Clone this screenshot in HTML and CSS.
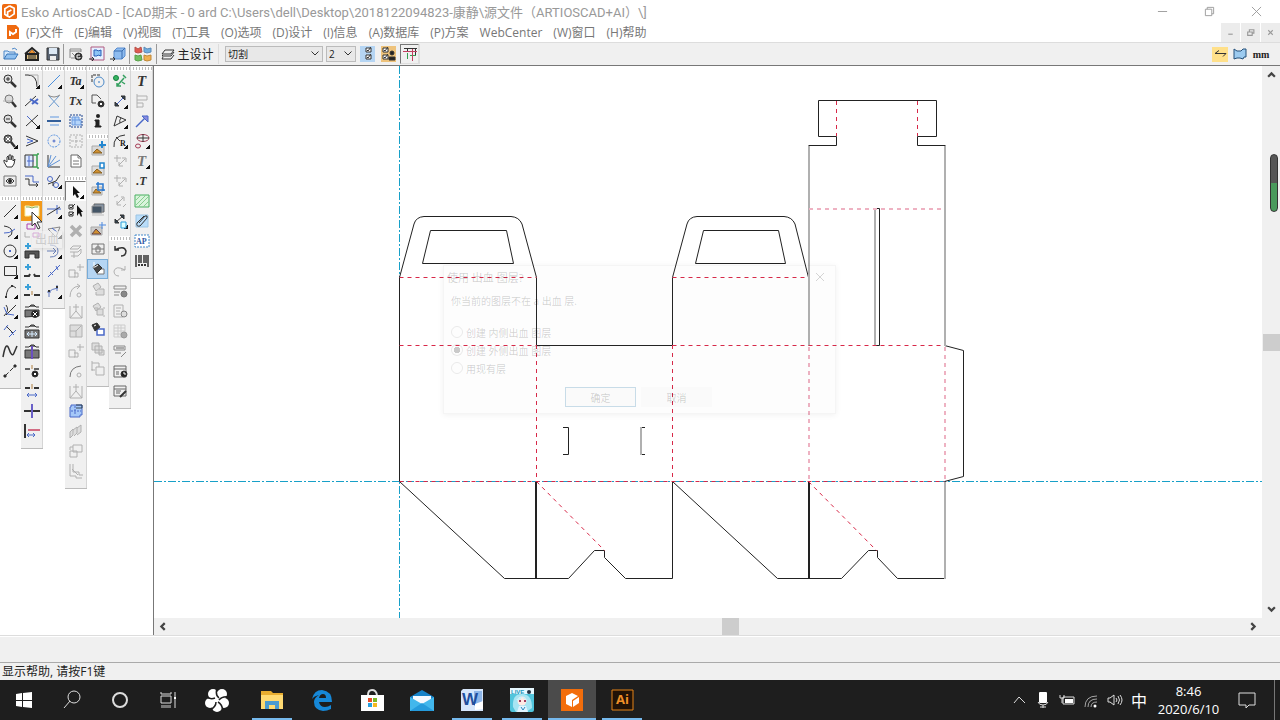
FILE: index.html
```html
<!DOCTYPE html>
<html lang="zh-CN">
<head>
    <meta charset="UTF-8">
    <meta name="viewport" content="width=device-width, initial-scale=1.0">
    <title>Esko ArtiosCAD</title>
    <link rel="stylesheet" href="styles.css">
</head>
<body>
    <header class="titlebar">
        <svg class="logo" viewBox="0 0 16 16"><rect width="16" height="16" rx="2" fill="#ef6a10"/><path d="M8 2l5 2.500v6L8 14l-2-1V8.500l4-2M6 13l-3-2V5l5-3" fill="none" stroke="#fff" stroke-width="1.800"/></svg>
        <h1>Esko ArtiosCAD - [CAD期末 - 0 ard C:\Users\dell\Desktop\2018122094823-康静\源文件（ARTIOSCAD+AI）\]</h1>
        <div class="window-buttons">
            <button aria-label="最小化"><svg viewBox="0 0 12 12"><path d="M1 6h10"/></svg></button>
            <button aria-label="还原"><svg viewBox="0 0 12 12"><path d="M1.500 3.500h7v7h-7zM3.500 3.500v-2h7v7h-2"/></svg></button>
            <button aria-label="关闭"><svg viewBox="0 0 12 12"><path d="M1 1l10 10M11 1L1 11"/></svg></button>
        </div>
    </header>

    <nav class="menubar">
        <svg class="doc-logo" viewBox="0 0 12 14"><path d="M0 0h9l3 3v11H0z" fill="#ef6a10"/><path d="M3 11V7l3 2 3-2V4" fill="none" stroke="#fff" stroke-width="2"/></svg>
        <button>(F)文件</button>
        <button>(E)编辑</button>
        <button>(V)视图</button>
        <button>(T)工具</button>
        <button>(O)选项</button>
        <button>(D)设计</button>
        <button>(I)信息</button>
        <button>(A)数据库</button>
        <button>(P)方案</button>
        <button>WebCenter</button>
        <button>(W)窗口</button>
        <button>(H)帮助</button>
        <div class="doc-buttons">
            <button aria-label="最小化文档"><svg viewBox="0 0 8 8"><path d="M2 5.500h4"/></svg></button>
            <button aria-label="还原文档"><svg viewBox="0 0 8 8"><path d="M1.500 3.500h4v3h-4zM3 3V1.500h4v3H6"/></svg></button>
            <button aria-label="关闭文档"><svg viewBox="0 0 8 8"><path d="M2 2l4 4M6 2L2 6"/></svg></button>
        </div>
    </nav>

    <div class="toolbar">
        <div class="group">
            <button aria-label="打开"><svg viewBox="0 0 16 16"><path d="M1 13V5h4l1 1h6v2" fill="#d5e8fb" stroke="#4a86c8"/><path d="M1 13l3-5h11l-3 5z" fill="#8fc0f0" stroke="#3a76b8"/><path d="M9 3q3-2 5 1" stroke="#4a86c8"/></svg></button>
            <button aria-label="打开标准"><svg viewBox="0 0 16 16"><path d="M1 8l7-6 7 6" stroke="#222" stroke-width="2"/><path d="M5 7l3-3 3 3z" fill="#f0a040" stroke="#c07020"/><path d="M2 14V8h12v6z" fill="#e0c080" stroke="#222" stroke-width="2"/><path d="M4 10h8M4 12h8" stroke="#222"/></svg></button>
            <button aria-label="保存"><svg viewBox="0 0 16 16"><path d="M2 2h12v12H2z" fill="#5a6472" stroke="#333"/><path d="M4 2h8v6H4z" fill="#dce8f4" stroke="none"/><path d="M5 10h6v4H5z" fill="#eee" stroke="none"/></svg></button>
        </div>
        <div class="group">
            <button aria-label="重建"><svg viewBox="0 0 16 16"><path d="M2 12V3h11v3M2 5h11M4 7l3 3M3 12h4" stroke="#888"/><circle cx="10.500" cy="10.500" r="3.500" fill="#333"/><path d="M12 9h-3v3h3v-1" stroke="#fff"/></svg></button>
            <button aria-label="转换设计"><svg viewBox="0 0 16 16"><path d="M2 1h13v13H2z" fill="#e6f0ff" stroke="#b05a80"/><path d="M5 4h3l1 1 3-1v6l-3-1-1 1H5z" fill="#8cc4f5" stroke="#2a5fb8"/><path d="M0 13h5M3 11l2 2-2 2"/></svg></button>
            <button aria-label="转换三维"><svg viewBox="0 0 16 16"><path d="M4 5l3-3h8v8l-3 3H4z" fill="#8ebcf0" stroke="#5a8cce"/><path d="M4 5h8v8M12 5l3-3" stroke="#3a6cae"/><path d="M0 13h5M3 11l2 2-2 2"/></svg></button>
        </div>
        <div class="group layout">
            <button aria-label="布局"><svg viewBox="0 0 18 16"><path d="M1 1l3 2 3-2 1 5-4 1-3-1z" fill="#e05a50" stroke="#b85048"/><path d="M10 1l3 2 4-1v4l-4 1-3-1z" fill="#70aee0" stroke="#5a8ab8"/><path d="M1 9l3 1 3-1 1 5-4 1-3-1z" fill="#70c060" stroke="#58a048"/><path d="M10 9l3 1 4-1v5l-4 1-3-1z" fill="#f0b050" stroke="#c08838"/></svg></button>
        </div>
        <div class="group light">
            <button class="layer"><svg viewBox="0 0 14 16"><path d="M1 8l3-4h9l-3 4zM2 9l-1 1h9l3-4M2 11l-1 2h9l3-4"/></svg>主设计</button>
        </div>
        <div class="group lists">
            <span class="pick line-type"><select aria-label="线型"><option>切割</option><option>折痕</option></select><svg viewBox="0 0 8 5"><path d="M0.500 0.500L4 4l3.500-3.500"/></svg></span>
            <span class="pick weight"><select aria-label="点数"><option>2</option><option>3</option></select><svg viewBox="0 0 8 5"><path d="M0.500 0.500L4 4l3.500-3.500"/></svg></span>
        </div>
        <div class="group views">
            <button class="blue" aria-label="查看模式"><svg viewBox="0 0 14 16"><path d="M5 2h5v4H5zM5 9h5v4H5z" fill="#fff"/><path d="M6 4l1 1 3-4M6 11l1 1 3-4"/></svg></button>
            <button class="amber" aria-label="用户视图"><svg viewBox="0 0 14 16"><path d="M1 2h5v4H1zM1 9h5v4H1z" fill="#fff"/><path d="M2 4l1 1 3-4M2 11l1 1 3-4"/><circle cx="10" cy="7" r="2" fill="#222"/><path d="M7 14v-3h6v3z" fill="#222"/></svg></button>
            <button class="pressed" aria-label="层显示"><svg viewBox="0 0 16 16"><path d="M2 2.500h13M5.500 2v4M13.500 2v7"/><path d="M5.500 7v6M8 9.500h6" stroke="#30a050"/><path d="M1 5.500h14M10.500 3v12" stroke="#c04060"/></svg></button>
        </div>
        <div class="group units">
            <button class="yellow" aria-label="纹理方向"><svg viewBox="0 0 16 16"><path d="M3 7.500h11l-3 3M3 7.500l4-3"/></svg></button>
            <button aria-label="面"><svg viewBox="0 0 16 16"><path d="M2 3l3 2h4l2-2h3v8h-2l-1 2-3-1H5l-3 1z" fill="#9ccbf0" stroke="#24507a"/></svg></button>
            <button class="mm">mm</button>
        </div>
    </div>

    <main class="workspace">
        <aside class="palette">
            <div class="column">
                <div class="tools">
                    <button aria-label="放大"><svg viewBox="0 0 16 16"><circle cx="6" cy="6" r="4" fill="#ddd"/><path d="M4 6h4M6 4v4"/><path d="M9 9l5 5" stroke-width="2.500"/></svg></button>
                    <button aria-label="缩放到适合"><svg viewBox="0 0 16 16"><circle cx="7" cy="6" r="4" fill="#ddd" stroke="#777"/><path d="M1 8h9" class="g"/><path d="M10 9l4 5" stroke-width="2.500"/></svg></button>
                    <button aria-label="缩小"><svg viewBox="0 0 16 16"><circle cx="6" cy="6" r="4" fill="#ddd"/><path d="M4 6h4"/><path d="M9 9l5 5" stroke-width="2.500"/></svg></button>
                    <button class="more" aria-label="缩放"><svg viewBox="0 0 16 16"><circle cx="6" cy="6" r="4" fill="#777"/><path d="M4 4l4 4M8 4L4 8" stroke="#fff"/><path d="M9 9l4 5" stroke-width="2.500"/></svg></button>
                    <button aria-label="平移"><svg viewBox="0 0 16 16"><path d="M5 14L2 9V7l3 2V4l1-1 1 4V2h2v5l1-4h1v5l2-2-1 5-2 3z" fill="#fff"/></svg></button>
                    <button aria-label="预览"><svg viewBox="0 0 16 16"><path d="M2 3h12v10H2z" fill="#eee" stroke="#777"/><path d="M4 8q4-5 8 0q-4 5-8 0"/><circle cx="8" cy="8" r="1.500" fill="#222"/></svg></button>
                </div>
                <div class="tools">
                    <button class="more" aria-label="线"><svg viewBox="0 0 16 16"><path d="M2 14L14 2"/></svg></button>
                    <button class="more" aria-label="切线弧"><svg viewBox="0 0 16 16"><path d="M2 3q7 1 8 5t-4 6"/><path d="M2 10q5 1 11-4" class="b"/></svg></button>
                    <button class="more" aria-label="圆"><svg viewBox="0 0 16 16"><circle cx="8" cy="8" r="6"/><path d="M7 8h2" class="b" stroke-width="2"/></svg></button>
                    <button class="more" aria-label="矩形"><svg viewBox="0 0 16 16"><path d="M2.500 3.500h12v9h-12z"/></svg></button>
                    <button class="more" aria-label="弧"><svg viewBox="0 0 16 16"><path d="M4 14q1-10 7-11l3 2"/><path d="M3 14h2M9 3h2" stroke-width="2"/></svg></button>
                    <button class="more" aria-label="偏移弧"><svg viewBox="0 0 16 16"><path d="M4 2q4 5-2 11M14 2L4 12"/><path d="M2 4l3 7 7 1" class="b"/></svg></button>
                    <button aria-label="垂线"><svg viewBox="0 0 16 16"><path d="M4 3l7 7"/><path d="M2 7l4-5M7 14l7-7M9 9l3 3" class="b"/></svg></button>
                    <button aria-label="曲线"><svg viewBox="0 0 16 16"><path d="M1 14Q4-3 7 6t5 4l3-7" stroke-width="1.500"/></svg></button>
                    <button aria-label="端点"><svg viewBox="0 0 16 16"><path d="M3 13L13 3" stroke-dasharray="5 2"/><path d="M2 12h2v2H2zM12 2h2v2h-2z" fill="#222"/></svg></button>
                </div>
            </div>
            <div class="column">
                <div class="tools">
                    <button class="more" aria-label="圆角"><svg viewBox="0 0 16 16"><path d="M1 2h3q9 0 9 12"/><path d="M6 2h8v10" class="g"/></svg></button>
                    <button aria-label="修剪"><svg viewBox="0 0 16 16"><path d="M1 13L12 3"/><path d="M6 6l8 5M8 11l6-5" class="b" stroke-width="2"/></svg></button>
                    <button class="more" aria-label="分割"><svg viewBox="0 0 16 16"><path d="M2 13L14 2M7 7l7 7"/><path d="M3 3l4 4" class="b"/></svg></button>
                    <button aria-label="延伸"><svg viewBox="0 0 16 16"><path d="M2 3l12 5-12 5"/><path d="M3 6l6 2-6 2" class="b"/></svg></button>
                    <button aria-label="拉伸"><svg viewBox="0 0 16 16"><path d="M1 2h8v12H1z" fill="#dce8ff"/><path d="M9 2h4v12H9M13 1h2M13 15h2" stroke="#3aa050" stroke-width="1.500"/><path d="M5 3v10M3 8h7" class="b"/></svg></button>
                    <button aria-label="阶梯"><svg viewBox="0 0 16 16"><path d="M1 3h8v6h6" class="b"/><path d="M1 6h4v6h9l-2-2m2 2l-2 2"/></svg></button>
                </div>
                <div class="tools">
                    <button class="active" aria-label="出血"><svg viewBox="0 0 16 16"><path d="M1 3h4l3 1 3-1h4v10h-4l-3-1-3 1H1z" fill="#fff" stroke="#f8f0a0"/><path d="M2 4h3l3 1 3-1h3" stroke="#88b060"/></svg></button>
                    <button aria-label="桥接"><svg viewBox="0 0 16 16"><path d="M3 1h8v5H3zM9 10h6v4H9z" stroke="#b040b0"/><path d="M1 9v5h5" class="g"/></svg></button>
                    <button aria-label="添加槽"><svg viewBox="0 0 16 16"><path d="M1 15V8h14v7h-4v-4H5v4z" fill="#555"/><path d="M4 0v6M1 3h6" stroke="#3aa0d8" stroke-width="2"/></svg></button>
                    <button aria-label="添加桥"><svg viewBox="0 0 16 16"><path d="M0 13h5l1-2M10 11l1 2h5" stroke-width="2"/><path d="M4 1v6M1 4h6" stroke="#3aa0d8" stroke-width="2"/></svg></button>
                    <button aria-label="添加断点"><svg viewBox="0 0 16 16"><path d="M0 12h6m4 0h6" stroke-width="2"/><path d="M8 8v4" stroke="#b08040"/><path d="M4 1v6M1 4h6" stroke="#3aa0d8" stroke-width="2"/></svg></button>
                    <button aria-label="删除槽"><svg viewBox="0 0 16 16"><path d="M1 4h4l2-2h3l2 2h3M1 14V7h14v6z" fill="#777"/><circle cx="11" cy="11" r="3.500" fill="#222"/><path d="M9 9l4 4m0-4l-4 4" stroke="#fff"/></svg></button>
                    <button aria-label="移动槽"><svg viewBox="0 0 16 16"><path d="M1 4h4l2-2h3l2 2h3M1 7h14v8H1z" fill="#777"/><path d="M3 11h10M5 9l-2 2 2 2M11 9l2 2-2 2M8 8v6" stroke="#d5ebff"/></svg></button>
                    <button aria-label="对齐槽"><svg viewBox="0 0 16 16"><path d="M1 4h4l2-2h3l2 2h3M1 7h14v8H1z" fill="#777"/><path d="M8 3v13" stroke="#6a50c0" stroke-width="2"/></svg></button>
                    <button aria-label="删除断点"><svg viewBox="0 0 16 16"><path d="M1 6h5m4 0h5" stroke-width="1.500"/><path d="M8 2v4" stroke="#b08040"/><circle cx="11" cy="11" r="3" fill="#222"/><path d="M10 10l2 2m0-2l-2 2" stroke="#fff"/></svg></button>
                    <button aria-label="移动断点"><svg viewBox="0 0 16 16"><path d="M1 5h5m4 0h5" stroke-width="2"/><path d="M8 1v5" stroke="#b08040"/><path d="M3 12h10M5 10l-2 2 2 2M11 10l2 2-2 2" class="b"/></svg></button>
                    <button aria-label="中心断点"><svg viewBox="0 0 16 16"><path d="M0 8h16" stroke-width="2"/><path d="M8 1v14" stroke="#6a60c8" stroke-width="2"/></svg></button>
                    <button aria-label="间距"><svg viewBox="0 0 16 16"><path d="M1 1v14" stroke-width="2"/><path d="M4 7h12" stroke="#c84060" stroke-width="1.500"/><path d="M3 12h8M5 10l-2 2 2 2M9 10l2 2-2 2" class="b"/></svg></button>
                </div>
            </div>
            <div class="column">
                <div class="tools">
                    <button class="more" aria-label="构造线"><svg viewBox="0 0 16 16"><path d="M2 14L14 2" stroke="#4c90dd"/></svg></button>
                    <button aria-label="弧构造"><svg viewBox="0 0 16 16"><path d="M3 3l10 11M13 3L3 14" stroke="#6a9ad0"/><path d="M2 2q6 4 12 0" stroke="#888"/></svg></button>
                    <button aria-label="偏移线"><svg viewBox="0 0 16 16"><path d="M4 4h9M4 12h9" stroke="#a8c4e8" stroke-width="2"/><path d="M1 8h14" stroke="#345f9a" stroke-width="2"/></svg></button>
                    <button aria-label="构造圆"><svg viewBox="0 0 16 16"><circle cx="8" cy="8" r="6" stroke="#5590e0" stroke-dasharray="2 1"/><circle cx="8" cy="8" r="1" class="b"/></svg></button>
                    <button aria-label="角度线"><svg viewBox="0 0 16 16"><path d="M2 2v12h12"/><path d="M2 14L5 2M2 14L10 3M2 14L14 7" stroke="#5f93d8"/></svg></button>
                    <button class="more" aria-label="切线"><svg viewBox="0 0 16 16"><circle cx="4" cy="6" r="2.500" class="b"/><circle cx="10" cy="12" r="2.500" class="b"/><path d="M2 11l8-3 4-6M7 13V9"/></svg></button>
                </div>
                <div class="tools">
                    <button class="more" aria-label="偏移"><svg viewBox="0 0 16 16"><path d="M1 6h14M11 2v9" class="b"/><path d="M1 12L14 4"/></svg></button>
                    <button class="more" aria-label="旋转"><svg viewBox="0 0 16 16"><path d="M2 6l12-2-4 10z" stroke="#888"/><path d="M6 5l5 4" class="b"/></svg></button>
                    <button class="more" aria-label="镜像弧"><svg viewBox="0 0 16 16"><path d="M4 2q8 0 8 6t-8 6M1 8h9M7 5l3 3-3 3" stroke="#6a80b8"/></svg></button>
                    <button aria-label="测量线"><svg viewBox="0 0 16 16"><path d="M2 14L14 2M10 3l2 4M4 9l3 3" class="b"/></svg></button>
                    <button class="more" aria-label="节点弧"><svg viewBox="0 0 16 16"><path d="M3 14V9q2-3 9-4M11 2v6M1 9h4" stroke="#6078c0"/><path d="M2 8h2M10 4h2" stroke-width="2"/></svg></button>
                </div>
            </div>
            <div class="column">
                <div class="tools">
                    <button class="more glyph">Ta</button>
                    <button class="glyph">Tx</button>
                    <button aria-label="文字区域"><svg viewBox="0 0 16 16"><path d="M4 4h7v3h2v5H4zM7 4v8M4 7h8" fill="#b5d5fa" stroke="#6a9ae0"/><path d="M2 2h12v12H2z" stroke="#1b438f" stroke-dasharray="2 1"/></svg></button>
                    <button aria-label="中心标记"><svg viewBox="0 0 16 16"><path d="M2 2h12v12H2z" class="g" stroke-dasharray="2 1"/><path d="M8 3v10M3 8h10" class="g" stroke-dasharray="3 1"/></svg></button>
                    <button aria-label="报告"><svg viewBox="0 0 16 16"><path d="M3 2h7l3 3v9H3z" fill="#fff" stroke="#666"/><path d="M10 2v3h3M5 8h6M5 11h6" stroke="#777"/></svg></button>
                </div>
                <div class="tools">
                    <button class="more pressed" aria-label="选择"><svg viewBox="0 0 16 16"><path d="M5 3v10l2-2 2 4 2-1-2-4h3z" fill="#111" stroke="none"/></svg></button>
                    <button aria-label="选择方式"><svg viewBox="0 0 16 16"><path d="M1 2h4v4H1zM1 9h4v4H1zM2 4l1 1 4-4M2 11l1 1 3-3"/><path d="M9 2v11l2-3 2 4 1-1-1-4h2z" fill="#111" stroke="none"/></svg></button>
                    <button aria-label="删除"><svg viewBox="0 0 16 16"><path d="M3 3l10 10M13 3L3 13" class="g" stroke-width="3.500"/></svg></button>
                    <button aria-label="变更"><svg viewBox="0 0 16 16"><path d="M2 6l3-3h8l-3 3zM2 9h8l3-3v4l-3 3H3M6 9v6" class="g"/></svg></button>
                    <button aria-label="移动"><svg viewBox="0 0 16 16"><path d="M1 7h6v7H1zM6 10h4v4H6M12 1v7M9 4h7" class="g"/></svg></button>
                    <button aria-label="旋转选择"><svg viewBox="0 0 16 16"><path d="M2 14q0-10 9-11M9 1l3 2-3 3" class="g"/><circle cx="11" cy="12" r="2" class="g"/></svg></button>
                    <button aria-label="镜像"><svg viewBox="0 0 16 16"><path d="M2 3v12h12V3M2 15l6-7 6 7M8 1v7M5 4h6" class="g"/></svg></button>
                    <button aria-label="缩放选择"><svg viewBox="0 0 16 16"><path d="M2 2h12v12H2zM2 8h6v6M8 8l5-5" class="g" fill="#ddd"/></svg></button>
                    <button aria-label="复制移动"><svg viewBox="0 0 16 16"><path d="M1 7h6v7H1zM6 10h4v4H6M12 1v7M9 4h7" class="g"/></svg></button>
                    <button aria-label="复制旋转"><svg viewBox="0 0 16 16"><path d="M2 14q0-10 11-11" stroke="#777"/><circle cx="11" cy="12" r="2" class="g"/></svg></button>
                    <button aria-label="复制镜像"><svg viewBox="0 0 16 16"><path d="M2 3v12h12V3M2 15l6-7 6 7M8 1v7M5 4h6" class="g"/></svg></button>
                    <button aria-label="组合"><svg viewBox="0 0 16 16"><path d="M3 2h11v10h-2v2H2V4h1z" fill="#a5c8f8" class="b"/><path d="M7 3v9M3 8h10" class="b" stroke-dasharray="2 1"/><path d="M8 2h6v3H8" stroke="#345"/></svg></button>
                    <button aria-label="序列"><svg viewBox="0 0 16 16"><path d="M2 9l3-3v6l-3 3zM5 7l4-3v6l-3 3M9 5l4-3v7l-4 3" class="g" fill="#ddd"/></svg></button>
                    <button aria-label="对调"><svg viewBox="0 0 16 16"><path d="M5 2h9v7H5zM2 8h7v6H2zM2 7V4h3" class="g"/></svg></button>
                    <button aria-label="路径"><svg viewBox="0 0 16 16"><path d="M2 1v12h6v2h6M5 1v8h6v3h4M4 6l6 6" class="g"/></svg></button>
                </div>
            </div>
            <div class="column">
                <div class="tools tight">
                    <button aria-label="创建圆"><svg viewBox="0 0 16 16"><path d="M2 9V2h9" stroke-dasharray="3 1"/><circle cx="9" cy="9" r="5" stroke="#4b89c8"/><circle cx="9" cy="9" r="0.500" stroke="#4b89c8"/></svg></button>
                    <button aria-label="删除组"><svg viewBox="0 0 16 16"><path d="M2 10V2h5l4 4M2 10h4" stroke="#555"/><circle cx="11" cy="11" r="3" fill="#333"/><path d="M10 10l2 2m0-2l-2 2" stroke="#fff"/></svg></button>
                    <button aria-label="信息"><svg viewBox="0 0 16 16"><circle cx="8" cy="3" r="2" fill="#222" stroke="none"/><path d="M5 7h4v6h2v1H5v-1h1V8H5z" fill="#222" stroke="#222"/></svg></button>
                </div>
                <div class="tools">
                    <button aria-label="添加图像"><svg viewBox="0 0 16 16"><path d="M2 5h12v9H2z" fill="#d9d9d9" stroke="#aaa"/><path d="M3 12l4-4 5 4z" fill="#d09030" stroke="#876020"/><path d="M12 0v7M9 4h7" stroke="#2386d0" stroke-width="2"/></svg></button>
                    <button aria-label="更新图像"><svg viewBox="0 0 16 16"><path d="M2 5h12v9H2z" fill="#ddd" stroke="#aaa"/><path d="M3 12l4-4 5 4z" fill="#d09030" stroke="#876020"/><path d="M10 2h4v5h-4z" fill="#fff" stroke="#2386d0" stroke-width="1.500"/></svg></button>
                    <button aria-label="裁剪图像"><svg viewBox="0 0 16 16"><path d="M2 6h10v8H2z" fill="#ddd" stroke="#aaa"/><path d="M3 12l3-4 5 4z" fill="#d09030" stroke="#876020"/><path d="M8 1v8h7M6 3h7v7" stroke="#2a78d0" stroke-width="1.500"/></svg></button>
                    <button aria-label="图像层"><svg viewBox="0 0 16 16"><path d="M4 3h10v8H4z" fill="#8094ab" stroke="#666"/><path d="M2 5h10v7H2z" fill="#456" stroke="#999"/><path d="M2 14h12" stroke="#bbb"/></svg></button>
                    <button aria-label="移动图像"><svg viewBox="0 0 16 16"><path d="M1 6h11v8H1z" fill="#ccc" stroke="#aaa"/><path d="M2 13l4-5 5 5z" fill="#d09030" stroke="#644"/><path d="M12 1v7M9 4h7" stroke="#4a88e0"/></svg></button>
                    <button aria-label="图形框"><svg viewBox="0 0 16 16"><path d="M2 3h12v10H2zM2 8h12M8 3v5M6 6h4v5H6z" fill="#eee" stroke="#777"/></svg></button>
                    <button class="blue" aria-label="填充"><svg viewBox="0 0 16 16"><path d="M9 8h5v5H7z" fill="#fff" stroke="#777"/><path d="M3 6l5-3 4 4-5 5z" fill="#444"/><path d="M4 1v6M5 6l3-2" stroke="#fff"/></svg></button>
                    <button aria-label="填充形状"><svg viewBox="0 0 16 16"><path d="M3 5l5-3 3 4-5 4zM9 8h5v6H6v-3" class="g" fill="#ddd"/></svg></button>
                    <button aria-label="填充节点"><svg viewBox="0 0 16 16"><path d="M3 5l5-3 3 4-5 4zM7 8h6v6H7zM5 7h3M13 7h2M13 15h2" class="g" fill="#ddd"/></svg></button>
                    <button aria-label="填充边框"><svg viewBox="0 0 16 16"><path d="M7 8h7v6H7z" fill="#fff" class="b" stroke-width="1.500"/><path d="M2 4l5-2 3 4-5 4z" fill="#333"/><path d="M4 5l2-1" stroke="#fff"/></svg></button>
                    <button aria-label="置前"><svg viewBox="0 0 16 16"><path d="M2 2h7v7H2zM9 9h5v5H9zM5 5h7v7H5z" class="g" fill="#ddd"/></svg></button>
                    <button aria-label="置后"><svg viewBox="0 0 16 16"><path d="M6 6h8v8H6zM2 2h7v4M2 2v7h3M1 1h2M1 9h2" class="g"/></svg></button>
                </div>
            </div>
            <div class="column">
                <div class="tools">
                    <button aria-label="检查"><svg viewBox="0 0 16 16"><circle cx="4" cy="5" r="2.500" fill="#35b460" stroke="#168040"/><path d="M5 13l7-8M10 9l3 2M5 10v3h4M11 2l3 3" stroke="#35a060" stroke-width="1.500"/></svg></button>
                    <button class="more" aria-label="尺寸"><svg viewBox="0 0 16 16"><path d="M4 12l8-8" class="b"/><path d="M3 9v4h4zM9 3h4v4z" fill="#345"/></svg></button>
                    <button class="more" aria-label="角度"><svg viewBox="0 0 16 16"><path d="M2 13L5 3l9 4-12 6M9 5q-2 2-1 5"/></svg></button>
                    <button class="more" aria-label="半径"><svg viewBox="0 0 16 16"><path d="M2 14Q1 3 13 2M4 4l4 4"/><text x="8" y="13" class="mini">R</text></svg></button>
                    <button aria-label="编辑尺寸"><svg viewBox="0 0 16 16"><path d="M7 12l6-6M7 9v4h4M10 5h4v4M5 2v7M2 5h7" class="g"/></svg></button>
                    <button aria-label="移动尺寸"><svg viewBox="0 0 16 16"><path d="M7 12l6-6M7 9v4h4M10 5h4v4M5 2v7M2 5h7" class="g"/></svg></button>
                    <button aria-label="旋转尺寸"><svg viewBox="0 0 16 16"><path d="M5 11l6-6M5 8v4h4M9 4h3v4M2 4l4-2M14 11l-3 3" class="g"/></svg></button>
                    <button class="more" aria-label="更新尺寸"><svg viewBox="0 0 16 16"><path d="M4 9l7-6"/><path d="M3 6v4h4zM8 2h4v4z" fill="#345"/><path d="M9 9h5v6H9z" fill="#dff" stroke="#2b9ddb"/></svg></button>
                </div>
                <div class="tools">
                    <button aria-label="撤销"><svg viewBox="0 0 16 16"><path d="M3 3v4h4M3 7q9-5 11 1 0 5-5 5" stroke-width="1.500"/></svg></button>
                    <button aria-label="重做"><svg viewBox="0 0 16 16"><path d="M13 3v4H9M13 7Q4 2 2 8q0 5 5 5" class="g"/></svg></button>
                    <button aria-label="播放列表"><svg viewBox="0 0 16 16"><path d="M2 3h12v3H2zM2 9h6M2 12h5" stroke="#888"/><circle cx="12" cy="11" r="3" fill="#888" stroke="#777"/></svg></button>
                    <button aria-label="播放步骤"><svg viewBox="0 0 16 16"><path d="M2 2h9v12H2zM4 5h5M4 8h4M4 11h4" class="g"/><circle cx="12" cy="11" r="3" fill="#ddd" stroke="#888"/></svg></button>
                    <button aria-label="删除步骤"><svg viewBox="0 0 16 16"><path d="M2 2h11v12H2zM2 5h11M2 8h11M2 11h11M6 2v12M9 2v12" stroke="#ccc"/><circle cx="12" cy="12" r="3" fill="#aaa" stroke="#999"/></svg></button>
                    <button aria-label="编辑步骤"><svg viewBox="0 0 16 16"><path d="M2 3h11v4H2zM3 10h6M14 9l-5 5" stroke="#888"/><path d="M4 5h8" stroke="#aaa" stroke-width="2"/></svg></button>
                    <button aria-label="重建步骤"><svg viewBox="0 0 16 16"><path d="M2 3h12v11H2zM2 6h12M4 9h3M4 11h3" stroke="#666"/><circle cx="12" cy="11" r="3" fill="#222"/><path d="M11 10h2v2" stroke="#fff"/></svg></button>
                    <button aria-label="记录"><svg viewBox="0 0 16 16"><path d="M2 3h12v10H2zM2 6h12M4 8h5M4 10h4" stroke="#666"/><path d="M14 8l-6 6" stroke-width="2"/></svg></button>
                </div>
            </div>
            <div class="column">
                <div class="tools">
                    <button class="glyph large">T</button>
                    <button aria-label="对齐"><svg viewBox="0 0 16 16"><path d="M3 1v14M3 3h10v4H3M3 10h6v4H3" class="g"/></svg></button>
                    <button aria-label="箭头"><svg viewBox="0 0 16 16"><path d="M2 14L13 3" class="b" stroke-width="1.500"/><path d="M8 3h6v6z" fill="#8a8ae0" class="b"/></svg></button>
                    <button class="more" aria-label="细节"><svg viewBox="0 0 16 16"><ellipse cx="9" cy="5" rx="6" ry="3.500" stroke="#a43c54"/><ellipse cx="4" cy="13" rx="2.500" ry="2" stroke="#a43c54"/><path d="M9 1v8M3 5h12"/></svg></button>
                    <button class="glyph outline large more">T</button>
                    <button class="glyph">.T</button>
                    <button aria-label="剖面线"><svg viewBox="0 0 16 16"><path d="M1 2h14v12H1z" fill="#d9f4dc" stroke="#48b060"/><path d="M2 7l5-5M2 12L12 2M4 14L15 3M9 14l6-6" stroke="#88cd90"/></svg></button>
                    <button aria-label="附件"><svg viewBox="0 0 16 16"><path d="M2 2h12v12H2z" fill="#b9ddfa" stroke="#9cc5e4"/><path d="M5 10l6-7q3-1 2 2l-7 8q-4 1-3-3l7-7"/></svg></button>
                    <button aria-label="文字框"><svg viewBox="0 0 16 16"><path d="M1 2h14v12H1z" fill="#fff" stroke="#458acb" stroke-dasharray="2 1"/><text x="2" y="11" class="mini blue-text">AP</text></svg></button>
                    <button aria-label="条码"><svg viewBox="0 0 16 16"><path d="M2 2v12M5 2v8M7 2v8M10 2v8M12 2v8M14 2v12" stroke-width="1.500"/><path d="M4 12h9" stroke-dasharray="2 1" stroke-width="2"/></svg></button>
                </div>
            </div>
            <div class="tip">出血</div>
            <svg class="cursor" viewBox="0 0 12 19"><path d="M1 1v14l3-3 3 6 2-1-3-6h5z" fill="#fff" stroke="#333"/></svg>
        </aside>

        <section class="view">
            <svg class="drawing" viewBox="154 66 1108 552" preserveAspectRatio="xMinYMin slice">
                <!-- axes through the design origin -->
                <path class="axis" d="M399.500 66v552M154 481.500h1108"/>
                <!-- cut lines -->
                <path class="cut" d="M399.500 481.500v-204L414 224q2-7 10-7.500h87q8 .5 11 7.500l14.500 53.500v68h136v-68L687 224q2-7 10-7.500h87q8 .5 11 7.500l13.500 53.500"/>
                <path class="cut" d="M430.500 230.500h76l7 33h-91zM703.500 230.500h75l7 33h-90z"/>
                <path class="cut" d="M808.500 145.500h28v-9h-18v-36h118v36h-19v9h28"/>
                <path class="cut" d="M944.500 345.500l19 5v126l-19 5"/>
                <path class="cut" d="M399.500 481.500l105 97h64l26-28h10v7l21 21h47v-97l105 97h64l27-28h9v7l20 21h47"/>
                <path class="cut" d="M563 427.500h5.500v27H563M645 427.500h-4M645 454.500h-4M875 208.500h4.500v137H875"/>
                <path class="cut wide" d="M536 482v97M809 482v97"/>
                <path class="cut soft" d="M809 146v200M945 146v200M945 482v97M875 209v136M641 427v28"/>
                <!-- crease lines -->
                <path class="crease" d="M399.500 277.500h137M672.500 277.500h136M399.500 345.500h137M672.500 345.500h272M399.500 481.500h545"/>
                <path class="crease" d="M536.500 345v137M672.500 345v137M836.500 101v35M917.500 101v35M536.500 481.500l68 69M808.500 481.500l68 69"/>
                <path class="crease soft" d="M809 347v134M945 347v134M809 209h136"/>
            </svg>

            <form class="dialog">
                <header><h2>使用 出血 图层?</h2><button type="button" aria-label="关闭"><svg viewBox="0 0 10 10"><path d="M1 1l8 8M9 1L1 9"/></svg></button></header>
                <p>你当前的图层不在 a 出血 层.</p>
                <div class="choices">
                    <label><input type="radio" name="bleed">创建 内侧出血 图层</label>
                    <label><input type="radio" name="bleed" checked>创建 外侧出血 图层</label>
                    <label><input type="radio" name="bleed">用现有层</label>
                </div>
                <footer><button type="button" class="ok">确定</button><button type="button">取消</button></footer>
            </form>
        </section>

        <div class="vscroll">
            <button aria-label="向上"><svg viewBox="0 0 8 8"><path d="M1 6l3-3 3 3"/></svg></button>
            <span class="thumb"></span>
            <button aria-label="向下"><svg viewBox="0 0 8 8"><path d="M1 2l3 3 3-3"/></svg></button>
            <span class="marker"></span>
        </div>
        <div class="hscroll">
            <button aria-label="向左"><svg viewBox="0 0 8 8"><path d="M6 1L3 4l3 3"/></svg></button>
            <span class="thumb"></span>
            <button aria-label="向右"><svg viewBox="0 0 8 8"><path d="M2 1l3 3-3 3"/></svg></button>
        </div>
    </main>

    <div class="message"></div>
    <div class="status">显示帮助, 请按F1键</div>

    <footer class="taskbar">
        <button aria-label="开始"><svg viewBox="0 0 24 24"><path d="M4 6l6-1v7H4zM11 5l9-1v8h-9zM4 13h6v6l-6-1zM11 13h9v7l-9-1z" fill="#fff"/></svg></button>
        <button aria-label="搜索"><svg viewBox="0 0 24 24"><circle cx="14" cy="9" r="6" class="w"/><path d="M10 13l-6 7" class="w"/></svg></button>
        <button aria-label="Cortana"><svg viewBox="0 0 24 24"><circle cx="12" cy="12" r="7" class="w" stroke-width="2"/></svg></button>
        <button aria-label="任务视图"><svg viewBox="0 0 24 24"><path d="M5 8h10v7H5zM5 4v2h10V4M19 4v16" class="w"/><path d="M5 17h10v3H5z" fill="#777"/><path d="M18 9h2v2h-2z" fill="#fff"/></svg></button>
        <button class="app" aria-label="浏览器"><svg viewBox="0 0 24 24"><g fill="#fff"><circle cx="8" cy="6" r="5"/><circle cx="17" cy="6" r="5"/><circle cx="19" cy="15" r="5"/><circle cx="12" cy="19" r="5"/><circle cx="5" cy="15" r="5"/><circle cx="12" cy="12" r="6"/></g><g class="swirl"><path d="M12 0q-2 7 2 10"/><path d="M24 9q-7-1-10 3"/><path d="M18 23q-1-7-5-9"/><path d="M5 22q6-3 6-8"/><path d="M0 8q5 4 10 2"/></g></svg></button>
        <button class="app open first" aria-label="文件资源管理器"><svg viewBox="0 0 24 24"><path d="M1 3h10l2 2h10v16H1z" fill="#e8ad30"/><path d="M1 7h22v14H1z" fill="#ffda72"/><path d="M5 21v-8h14v8h-4v-4H9v4z" fill="#4a9bd0"/></svg></button>
        <button class="app" aria-label="Edge"><svg viewBox="0 0 24 24"><path d="M2 11Q4 2 12 2q10 1 10 12H9q1 5 6 5 3 0 6-2v4q-4 2-8 2-9-1-9-9 0-4 5-7-5 1-7 4zm7-1h7q0-4-3-4t-4 4z" fill="#1688d8"/></svg></button>
        <button class="app" aria-label="应用商店"><svg viewBox="0 0 24 24"><path d="M1 7h23v16H1z" fill="#fff"/><path d="M8 7q0-5 4-5t5 5" class="w" stroke-width="2"/><path d="M8 10h4v4H8z" fill="#e84d2a"/><path d="M13 10h4v4h-4z" fill="#7ab828"/><path d="M8 15h4v4H8z" fill="#28a0e0"/><path d="M13 15h4v4h-4z" fill="#f5b920"/></svg></button>
        <button class="app" aria-label="邮件"><svg viewBox="0 0 24 24"><path d="M0 9l12-7 12 7v13H0z" fill="#1682c8"/><path d="M3 8h18v8H3z" fill="#f4f9ff"/><path d="M0 9l12 7L24 9v14H0z" fill="#42b7ec"/><path d="M0 23l12-8 12 8z" fill="#259bdc"/></svg></button>
        <button class="app open" aria-label="Word"><svg viewBox="0 0 24 24"><path d="M3 1h20v22H1V3z" fill="#d6e6fb"/><path d="M14 3h8v15h-8z" fill="#8db5e8"/><text x="2" y="17" class="word">W</text><path d="M15 16l8-3v8l-8 1z" fill="#fff"/></svg></button>
        <button class="app open" aria-label="直播"><svg viewBox="0 0 24 24"><rect width="24" height="24" rx="2" fill="#52c5dc"/><path d="M0 0h24v6H0z" fill="#e7f8ff"/><path d="M3 19Q2 6 12 6t10 14l-6 4H6z" fill="#a7e5f3"/><circle cx="12" cy="13" r="4.500" fill="#ffe9e4"/><path d="M6 12q5-6 12 0l-4-1-2-2-2 3z" fill="#c8f1fa"/><path d="M9 13h2M14 13h2" stroke="#a04060" stroke-width="2"/><path d="M9 18h7l2 6H7z" fill="#e0f4ff"/><path d="M11 19l2 3 2-3" stroke="#2787c0" fill="none"/><circle cx="19" cy="4" r="2" fill="#234"/><text x="1" y="6" class="live">LIVE</text></svg></button>
        <button class="app open current" aria-label="ArtiosCAD"><svg viewBox="0 0 24 24"><path d="M1 1h22v22H1z" fill="#f26d0b"/><path d="M12 5l6 3-6 4v7l-6-3V8z" fill="#fff"/><path d="M19 9v6l-6 4v-6z" fill="#fff"/></svg></button>
        <button class="app open" aria-label="Illustrator"><svg viewBox="0 0 24 24"><path d="M2 2h21v20H2z" fill="#211206" stroke="#e48216"/><text x="6" y="16" class="ai">Ai</text></svg></button>

        <div class="tray">
            <button aria-label="隐藏的图标"><svg viewBox="0 0 16 16"><path d="M3 11l5-6 6 6" class="w"/></svg></button>
            <button aria-label="麦克风"><svg viewBox="0 0 16 16"><rect x="4" y="0" width="8" height="11" rx="1" fill="#fff"/><path d="M3 10q1 3 5 3t5-3M8 13v3M5 15h6" class="w"/></svg></button>
            <button aria-label="电池"><svg viewBox="0 0 16 16"><path d="M4 5h11v7H4z" class="w"/><path d="M6 7h8v4H6z" fill="#fff"/><path d="M1 3v3h4V3M3 6v5" class="w"/></svg></button>
            <button aria-label="网络"><svg viewBox="0 0 16 16"><path d="M2 15Q2 4 14 4M5 15q0-8 9-8M8 15q0-5 6-5" class="w" opacity=".7"/><circle cx="12" cy="14" r="1.500" fill="#fff"/></svg></button>
            <button aria-label="音量"><svg viewBox="0 0 16 16"><path d="M1 6h2l4-3v10l-4-3H1zM9 6q2 2 0 4M11 4q3 4 0 8M13 3q4 5 0 10" class="w"/></svg></button>
            <button class="ime">中</button>
            <div class="clock"><time>8:46</time><span>2020/6/10</span></div>
            <button class="notify" aria-label="通知"><svg viewBox="0 0 18 18"><path d="M1 2h16v12h-6l-3 3v-3H1z" class="w"/></svg></button>
            <span class="desktop"></span>
        </div>
    </footer>
</body>
</html>
```
FILE: styles.css
```css
* {
    box-sizing: border-box;
}
body {
    margin: 0;
    height: 100vh;
    display: flex;
    flex-direction: column;
    background-color: #f0f0f0;
    font-family: "Open Sans", "Noto Sans CJK SC", sans-serif;
    font-size: 12px;
    color: #222;
    overflow: hidden;
}
button {
    padding: 0;
    border: 0;
    background: none;
    font: inherit;
    color: inherit;
}
svg {
    display: block;
    flex: none;
}
h1, h2, p {
    margin: 0;
    font-weight: normal;
}

/* title and menu */
.titlebar, .menubar {
    display: flex;
    align-items: center;
    flex: none;
    background-color: #fff;
    white-space: nowrap;
}
.titlebar {
    height: 22px;
    padding-left: 2px;
    color: #999;
}
.titlebar h1 {
    font-family: Roboto, "Noto Sans CJK SC", sans-serif;
    font-size: 13px;
}
.logo {
    width: 15px;
    height: 15px;
    margin-right: 4px;
}
.window-buttons {
    display: flex;
    margin-left: auto;
}
.window-buttons button {
    width: 47px;
    display: flex;
    justify-content: center;
}
.window-buttons svg {
    width: 11px;
    height: 11px;
    fill: none;
    stroke: #999;
}
.menubar {
    gap: 11px;
    height: 20px;
    padding-left: 7px;
    color: #777;
}
.doc-logo {
    width: 12px;
    height: 14px;
    margin-right: -4px;
}
.doc-buttons {
    display: flex;
    gap: 1px;
    height: 19px;
    margin-left: auto;
}
.doc-buttons button {
    width: 19px;
    padding: 0 5px;
    background-color: #ececec;
}
.doc-buttons svg {
    fill: none;
    stroke: #999;
}

/* top toolbar */
.toolbar {
    display: flex;
    align-items: center;
    flex: none;
    height: 24px;
    border-top: 1px solid #ddd;
    border-bottom: 1px solid #777;
}
.group {
    display: flex;
    align-items: center;
    height: 20px;
    border-right: 1px solid #999;
}
.group + .group {
    padding: 0 1px;
}
.toolbar button {
    display: flex;
    align-items: center;
    justify-content: center;
    width: 21px;
    height: 20px;
}
.toolbar svg {
    width: 16px;
    height: 16px;
    fill: none;
    stroke: #333;
}
.toolbar .layout button {
    width: 24px;
}
.toolbar .layout svg {
    width: 18px;
}
.toolbar .light {
    border-color: #ddd;
}
.toolbar .layer {
    width: 59px;
    gap: 2px;
    white-space: nowrap;
}
.toolbar .layer svg {
    width: 14px;
}
.toolbar .lists {
    gap: 3px;
    padding: 0 3px 0 6px;
    border: 0;
}
.pick {
    position: relative;
    height: 16px;
}
.pick select {
    display: block;
    width: 100%;
    height: 16px;
    padding: 0 2px;
    appearance: none;
    border: 1px solid #bbb;
    border-radius: 0;
    background-color: #e8e8e8;
    font: 10px "Open Sans", "Noto Sans CJK SC", sans-serif;
    line-height: 14px;
    color: #222;
}
.line-type {
    width: 98px;
}
.weight {
    width: 30px;
}
.toolbar .pick svg {
    position: absolute;
    right: 4px;
    top: 5px;
    width: 8px;
    height: 5px;
    pointer-events: none;
}
.blue {
    background-color: #b5d5f3;
}
.toolbar .views {
    gap: 6px;
    padding-right: 0;
    border-color: #ddd;
}
.toolbar .views button {
    width: 15px;
    height: 16px;
}
.toolbar .views .pressed {
    width: 19px;
    height: 20px;
    margin-left: -2px;
    border: 1px solid;
    border-color: #777 #ddd #ddd #777;
}
.amber {
    background-color: #eec37c;
}
.toolbar .units {
    margin-left: auto;
    padding-right: 10px;
    gap: 4px;
    border: 0;
}
.toolbar .units button {
    width: 16px;
}
.toolbar .units .yellow {
    height: 15px;
    background-color: #ffe08a;
}
.toolbar .units .mm {
    font: bold 10px "Liberation Serif", serif;
    width: 18px;
}

/* workspace */
.workspace {
    flex: 1;
    min-height: 0;
    display: grid;
    grid-template-columns: 154px 1fr 18px;
    grid-template-rows: 1fr 17px;
    border-bottom: 1px solid #ddd;
}
.palette {
    position: relative;
    grid-row: 1 / 3;
    display: grid;
    grid-template-columns: 21px repeat(6, 22px);
    align-items: start;
    background-color: #fff;
    border-right: 1px solid #777;
}
.tools {
    padding-bottom: 5px;
    background-color: #f0f0f0;
    border-right: 1px solid #d5d5d5;
    box-shadow: 0 1px #bbb;
}
.tools:last-child {
    padding-bottom: 7px;
}
.tools.tight {
    padding-bottom: 3px;
}
.tools::before {
    content: "";
    display: block;
    height: 3px;
    border-top: 1px solid #fff;
    border-bottom: 1px solid #fff;
    background: repeating-linear-gradient(90deg, #fff 0 2px, #bbb 2px 3px);
}
.tools button {
    display: flex;
    align-items: center;
    justify-content: center;
    width: 100%;
    height: 20px;
    border: 1px solid transparent;
}
.tools svg {
    width: 16px;
    height: 16px;
    fill: none;
    stroke: #333;
}
.tools .b {
    stroke: #4968c8;
}
.tools .g, .toolbar .g {
    stroke: #b0b0b0;
}
.tools .more {
    background: linear-gradient(135deg, transparent 50%, #111 50%) right 1px bottom 1px / 4px 4px no-repeat;
}
.tools .pressed {
    border-color: #777 #fff #fff #777;
    background-color: #fafafa;
}
.tools .active {
    background-color: #f29a1a;
}
.tools .blue {
    border-color: #78acd8;
}
.tools .glyph {
    font: italic bold 12px/16px "Liberation Serif", serif;
    color: #333;
}
.tools .large {
    font-size: 15px;
}
.tools .outline {
    color: #777;
}
.mini {
    font: bold 8px "Liberation Serif", serif;
    fill: #222;
    stroke: none;
}
.blue-text {
    fill: #3158a4;
}
.tip {
    position: absolute;
    left: 32px;
    top: 165px;
    padding: 0 3px;
    background-color: rgba(240, 240, 240, 0.6);
    box-shadow: 1px 1px 3px rgba(0, 0, 0, 0.1);
    line-height: 17px;
    color: #ccc;
}
.cursor {
    position: absolute;
    left: 31px;
    top: 145px;
    width: 12px;
    height: 19px;
}
.view {
    position: relative;
    background-color: #fff;
    overflow: hidden;
}
.drawing {
    width: 100%;
    height: 100%;
    fill: none;
}
.axis {
    stroke: #18a0c8;
    stroke-dasharray: 8 2 2 2;
}
.cut {
    stroke: #222;
}
.cut.wide {
    stroke-width: 2;
}
.cut.soft {
    stroke: #b0b0b0;
    stroke-width: 2;
}
.crease {
    stroke: #d82848;
    stroke-dasharray: 4 4;
}
.crease.soft {
    stroke: #eeb2c2;
    stroke-width: 2;
}

/* dialog, nearly faded out */
.dialog {
    position: absolute;
    left: 289px;
    top: 199px;
    width: 393px;
    height: 149px;
    padding: 0 7px;
    background-color: rgba(128, 128, 128, 0.02);
    border: 1px solid rgba(0, 0, 0, 0.03);
    box-shadow: 0 1px 6px rgba(0, 0, 0, 0.06);
    font-size: 10px;
    color: rgba(0, 0, 0, 0.18);
}
.dialog header {
    display: flex;
    align-items: center;
    justify-content: space-between;
    height: 21px;
    margin: 0 -4px;
    padding-right: 7px;
}
.dialog h2 {
    font-size: 11px;
}
.dialog header svg {
    width: 10px;
    height: 10px;
    stroke: rgba(0, 0, 0, 0.16);
}
.dialog p {
    margin-top: 6px;
    line-height: 16px;
}
.choices {
    padding-top: 14px;
}
.dialog label {
    display: flex;
    align-items: center;
    gap: 3px;
    height: 18px;
}
.dialog input {
    appearance: none;
    width: 12px;
    height: 12px;
    margin: 0;
    border: 1px solid rgba(0, 0, 0, 0.08);
    border-radius: 50%;
}
.dialog input:checked {
    background: radial-gradient(circle, rgba(0, 0, 0, 0.2) 3px, transparent 3px);
}
.dialog footer {
    display: flex;
    gap: 5px;
    margin: 10px 0 0 114px;
}
.dialog footer button {
    width: 71px;
    height: 20px;
    background-color: rgba(0, 0, 0, 0.01);
}
.dialog footer .ok {
    border: 1px solid rgba(0, 100, 160, 0.2);
}

/* scroll bars */
.vscroll, .hscroll {
    display: flex;
    justify-content: space-between;
    align-items: center;
    background-color: #f0f0f0;
}
.vscroll {
    position: relative;
    flex-direction: column;
}
.hscroll {
    grid-column: 2 / 4;
    padding-right: 18px;
}
.vscroll button, .hscroll button {
    width: 17px;
    height: 17px;
    padding: 4px;
}
.vscroll svg, .hscroll svg {
    width: 9px;
    height: 9px;
    fill: none;
    stroke: #444;
    stroke-width: 2;
}
.thumb {
    width: 17px;
    height: 17px;
    background-color: #cdcdcd;
}
.hscroll .thumb {
    margin-left: 44px;
}
.marker {
    position: absolute;
    right: 2px;
    top: 88px;
    width: 8px;
    height: 58px;
    border: 1px solid #333;
    border-radius: 4px;
    background: linear-gradient(#565656 50%, #4a9a5c 50%);
}

/* bottom panels */
.message {
    flex: none;
    height: 26px;
    border-top: 1px solid #fff;
}
.status {
    flex: none;
    height: 18px;
    padding-left: 2px;
    border-top: 1px solid #aaa;
    line-height: 18px;
}
.taskbar {
    flex: none;
    display: flex;
    height: 40px;
    background-color: #1e1e1e;
    color: #fff;
}
.taskbar button {
    display: flex;
    align-items: center;
    justify-content: center;
    width: 48px;
}
.taskbar svg {
    width: 24px;
    height: 24px;
}
.taskbar .w {
    fill: none;
    stroke: #ddd;
}
.swirl {
    fill: none;
    stroke: #1e1e1e;
    stroke-width: 1.5;
}
.taskbar .app {
    width: 50px;
}
.taskbar .first {
    margin-left: 5px;
}
.taskbar .open {
    background: linear-gradient(#76b9ed, #76b9ed) bottom / 40px 2px no-repeat;
}
.taskbar .current {
    width: 48px;
    margin: 0 1px;
    background-color: #4b4b4b;
    background-size: 100% 2px;
}
.word {
    font: bold 17px "Liberation Sans", sans-serif;
    fill: #1f4f9e;
}
.live {
    font: bold 6px "Liberation Sans", sans-serif;
    fill: #2497bc;
}
.ai {
    font: bold 13px "Open Sans", sans-serif;
    fill: #ee9028;
}
.tray {
    display: flex;
    align-items: center;
    margin-left: auto;
}
.tray button {
    width: 24px;
    height: 40px;
}
.tray svg {
    width: 16px;
    height: 16px;
}
.tray .ime {
    font-size: 16px;
}
.clock {
    display: flex;
    flex-direction: column;
    width: 75px;
    text-align: center;
    font-size: 13px;
    line-height: 18px;
}
.tray .notify {
    width: 42px;
}
.tray .notify svg {
    width: 18px;
    height: 18px;
}
.desktop {
    width: 6px;
    height: 40px;
    margin-left: 6px;
    border-left: 1px solid #777;
}
```
